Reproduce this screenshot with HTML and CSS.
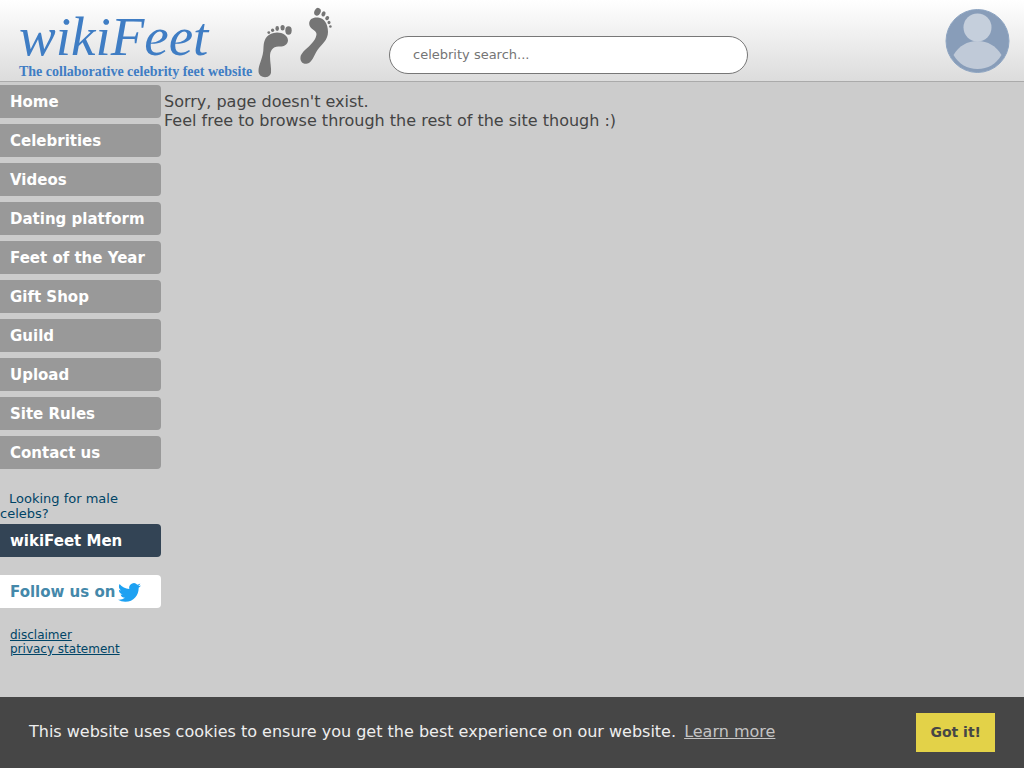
FILE: index.html
```html
<!DOCTYPE html>
<html lang="en">
<head>
<meta charset="utf-8">
<title>wikiFeet</title>
<link rel="stylesheet" href="styles.css">
</head>
<body>
<header class="header">
  <a class="logo" href="#">
    <span class="brand">
      <span class="brand-name">wikiFeet</span>
      <span class="brand-tagline">The collaborative celebrity feet website</span>
    </span>
    <svg class="feet" width="76" height="72" viewBox="257 7 76 72" aria-hidden="true">
      <path d="M263.500 47C264 38 268 33 277 32.500C283 32.500 288 36 288 40.500C287.500 45 283.500 47 278.500 46.500C272.500 46.500 270 51 270 56.500C270 62 271.500 68 271 72.500C270.500 79 258.500 79 258.500 71C258.500 64 263.500 58 263.500 47Z"/>
      <ellipse cx="288.500" cy="30.500" rx="3.200" ry="4.200"/>
      <ellipse cx="282.600" cy="27.700" rx="2.100" ry="2.700"/>
      <ellipse cx="277.200" cy="28.500" rx="1.800" ry="2.400"/>
      <ellipse cx="272.600" cy="30.300" rx="1.600" ry="1.800"/>
      <circle cx="268.800" cy="32.600" r="1.400"/>
      <path d="M309.200 24C309 19 313 17 318 17.500C324 18 328 23.500 328 32C328 40 322 44 317.500 50C314 55 312 63.500 306.500 63.800C302 64 300 61 300.500 57C301.500 50 316 44 316.500 34C316.500 30 309.500 29.500 309.200 24Z"/>
      <ellipse cx="317.500" cy="11.800" rx="3.100" ry="4" transform="rotate(25 317.500 11.800)"/>
      <ellipse cx="323.500" cy="13.900" rx="1.900" ry="2.700" transform="rotate(25 323.500 13.900)"/>
      <ellipse cx="327.200" cy="18.100" rx="1.800" ry="2.200" transform="rotate(35 327.200 18.100)"/>
      <ellipse cx="329" cy="22.500" rx="1.500" ry="1.800"/>
      <circle cx="330.400" cy="26.500" r="1.300"/>
    </svg>
  </a>
  <form class="search">
    <input class="search-input" type="text" placeholder="celebrity search..." aria-label="celebrity search">
  </form>
  <button class="avatar" type="button" aria-label="Account">
    <svg width="66" height="66" viewBox="0 0 66 66" aria-hidden="true">
      <circle cx="32.500" cy="33" r="31.500" fill="#889db9" stroke="#8ea5c2"/>
      <circle cx="32.500" cy="19.500" r="14" fill="#c5cfdc"/>
      <path d="M8.500 47C14 38 22 33 32.500 33C43 33 51 38 56.500 47C51 56 43 61 32.500 61C22 61 14 56 8.500 47Z" fill="#c0cad8"/>
    </svg>
  </button>
</header>
<div class="page">
  <aside class="sidebar">
    <nav class="menu">
      <a class="item" href="#">Home</a>
      <a class="item" href="#">Celebrities</a>
      <a class="item" href="#">Videos</a>
      <a class="item" href="#">Dating platform</a>
      <a class="item" href="#">Feet of the Year</a>
      <a class="item" href="#">Gift Shop</a>
      <a class="item" href="#">Guild</a>
      <a class="item" href="#">Upload</a>
      <a class="item" href="#">Site Rules</a>
      <a class="item" href="#">Contact us</a>
    </nav>
    <p class="hint">Looking for male celebs?</p>
    <a class="item item-men" href="#">wikiFeet Men</a>
    <a class="item item-follow" href="#">Follow us on
      <svg width="23" height="23" viewBox="0 0 24 24" role="img" aria-label="Twitter"><path fill="#1da1f2" d="M23.953 4.570a10 10 0 01-2.825.775 4.958 4.958 0 002.163-2.723c-.951.555-2.005.959-3.127 1.184a4.920 4.920 0 00-8.384 4.482C7.690 8.095 4.067 6.130 1.640 3.162a4.822 4.822 0 00-.666 2.475c0 1.710.870 3.213 2.188 4.096a4.904 4.904 0 01-2.228-.616v.060a4.923 4.923 0 003.946 4.827 4.996 4.996 0 01-2.212.085 4.936 4.936 0 004.604 3.417 9.867 9.867 0 01-6.102 2.105c-.390 0-.779-.023-1.170-.067a13.995 13.995 0 007.557 2.209c9.053 0 13.998-7.496 13.998-13.985 0-.210 0-.420-.015-.630A9.935 9.935 0 0024 4.590z"/></svg>
    </a>
    <div class="legal">
      <a href="#">disclaimer</a>
      <a href="#">privacy statement</a>
    </div>
  </aside>
  <main class="content">Sorry, page doesn't exist.<br>Feel free to browse through the rest of the site though :)</main>
</div>
<div class="cookies" role="dialog" aria-label="Cookie notice">
  <p class="cookies-text">This website uses cookies to ensure you get the best experience on our website. <a class="cookies-link" href="#">Learn more</a></p>
  <button class="cookies-button" type="button">Got it!</button>
</div>
</body>
</html>
```
FILE: styles.css
```css
* {
  box-sizing: border-box;
}

body {
  margin: 0;
  background: #ccc;
  color: #444;
  font: 16px/19px "DejaVu Sans", sans-serif;
}

.header {
  display: grid;
  grid-template-columns: 389px minmax(0, 359px) 1fr;
  height: 82px;
  padding-right: 13px;
  background: linear-gradient(#fff, #dcdcdc);
  border-bottom: 1px solid #aaa;
}

.logo {
  display: flex;
  align-items: flex-start;
  gap: 9px;
  padding: 7px 0 0 19px;
  color: #3f7dc4;
  text-decoration: none;
}

.brand {
  display: flex;
  flex-direction: column;
  width: 229px;
  white-space: nowrap;
}

.brand-name {
  font: italic 55px/59px "Liberation Serif", serif;
}

.brand-tagline {
  font: bold 14px/12px "Liberation Serif", serif;
}

.feet {
  fill: #757575;
}

.search {
  padding-top: 36px;
}

.search-input {
  display: block;
  width: 100%;
  height: 38px;
  padding: 0 23px 2px;
  border: 1px solid #777;
  border-radius: 19px;
  background: #fff;
  color: #444;
  font: 13px "DejaVu Sans", sans-serif;
}

.search-input::placeholder {
  color: #757575;
}

.avatar {
  align-self: start;
  justify-self: end;
  margin-top: 8px;
  padding: 0;
  border: 0;
  background: none;
}

.avatar svg {
  display: block;
}

.page {
  display: flex;
  gap: 3px;
  padding: 3px 0 80px;
}

.sidebar {
  flex: 0 0 161px;
}

.menu {
  display: grid;
  gap: 6px;
}

.item {
  display: flex;
  align-items: center;
  gap: 3px;
  height: 33px;
  padding: 2px 0 0 10px;
  border-radius: 0 4px 4px 0;
  background: #999;
  color: #fff;
  font-size: 15px;
  font-weight: bold;
  text-decoration: none;
}

.hint {
  margin: 22px 0 3px;
  color: #046;
  font-size: 13px;
  line-height: 15px;
  text-indent: 9px;
}

.item-men {
  background: #345;
}

.item-follow {
  margin-top: 18px;
  background: #fff;
  color: #48a;
}

.legal {
  display: grid;
  justify-items: start;
  padding: 20px 0 0 10px;
  font-size: 12px;
  line-height: 14px;
}

.legal a {
  color: #046;
}

.content {
  flex: 1;
  padding-top: 7px;
}

.cookies {
  position: fixed;
  right: 0;
  bottom: 0;
  left: 0;
  display: flex;
  align-items: center;
  justify-content: space-between;
  gap: 16px;
  padding: 16px 29px;
  background: #464646;
  color: #eee;
}

.cookies-text {
  margin: 0;
  padding-bottom: 2px;
}

.cookies-link {
  margin-left: 3px;
  color: #c4c4c4;
}

.cookies-button {
  padding: 10px 14px;
  border: 0;
  background: #e3d248;
  color: #464646;
  font: bold 14px/19px "DejaVu Sans", sans-serif;
}
```
